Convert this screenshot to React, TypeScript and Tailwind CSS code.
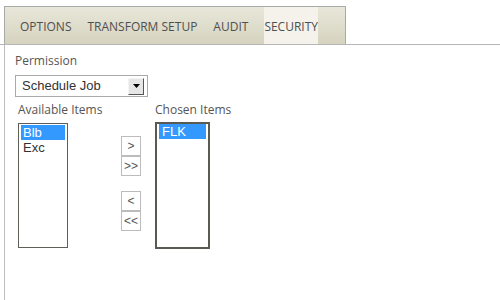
import React from "react";

const Tab = ({ label, active }: { label: string; active?: boolean }) => (
  <div
    className={
      "flex items-center pt-[2px] text-[12px] leading-[16px] text-[#4f4f4f] " +
      (active ? "bg-[#f4f2ea]" : "")
    }
  >
    {label}
  </div>
);

const Btn = ({ children }: { children: React.ReactNode }) => (
  <div className="w-[20px] h-[20px] border border-[#bcbcbc] bg-white flex items-center justify-center text-[12px] leading-none text-[#555] font-['Liberation_Sans',Arial,sans-serif]">
    {children}
  </div>
);

export default function App() {
  return (
    <div className="w-[500px] h-[300px] bg-white overflow-hidden font-['Open_Sans',sans-serif]">
      <div className="pt-[6px] pl-[4px]">
        <div className="w-[342px] h-[38px] border border-b-0 border-[#a9a9a9] bg-gradient-to-b from-[#e8e6d9] to-[#d6d4bf] flex items-stretch pl-[15px] gap-[16px]">
          <Tab label="OPTIONS" />
          <Tab label="TRANSFORM SETUP" />
          <Tab label="AUDIT" />
          <Tab label="SECURITY" active />
        </div>
      </div>
      <div className="border-t border-[#b5b5b5]">
        <div className="ml-[4px] border-l border-[#bdbdbd] h-[256px] pl-[10px] pt-[8px]">
          <div className="text-[12px] leading-[16px] text-[#555]">Permission</div>
          <div className="mt-[6px] w-[133px] h-[22px] border border-[#a9a9a9] flex items-center justify-between pl-[6px] pr-[3px] font-['Liberation_Sans',Arial,sans-serif] text-[13px] text-[#333]">
            <span>Schedule Job</span>
            <div className="w-[16px] h-[17px] border border-t-[#f4f4f4] border-l-[#f4f4f4] border-r-[#555] border-b-[#555] bg-[#e6e6e6] flex items-center justify-center">
              <svg width="7" height="4" viewBox="0 0 7 4">
                <path d="M0 0 H7 L3.5 4 Z" fill="#000" />
              </svg>
            </div>
          </div>
          <div className="mt-[5px] ml-[3px] flex items-start">
            <div className="w-[103px]">
              <div className="text-[12px] leading-[16px] text-[#555]">Available Items</div>
              <div className="mt-[5px] w-[50px] h-[125px] border border-[#5f5f5a] px-[2px] pt-[1px] font-['Liberation_Sans',Arial,sans-serif] text-[13px] leading-[15px] text-[#333]">
                <div className="bg-[#3399ff] text-white pl-[2px]">Blb</div>
                <div className="pl-[2px]">Exc</div>
              </div>
            </div>
            <div className="mt-[34px] flex flex-col">
              <Btn>&gt;</Btn>
              <Btn>&gt;&gt;</Btn>
              <div className="h-[15px]" />
              <Btn>&lt;</Btn>
              <Btn>&lt;&lt;</Btn>
            </div>
            <div className="ml-[14px]">
              <div className="text-[12px] leading-[16px] text-[#555]">Chosen Items</div>
              <div className="mt-[4px] w-[55px] h-[127px] border-2 border-[#5a5a55] px-[2px] font-['Liberation_Sans',Arial,sans-serif] text-[13px] leading-[15px] text-[#333]">
                <div className="bg-[#3399ff] text-white pl-[3px]">FLK</div>
              </div>
            </div>
          </div>
        </div>
      </div>
    </div>
  );
}
